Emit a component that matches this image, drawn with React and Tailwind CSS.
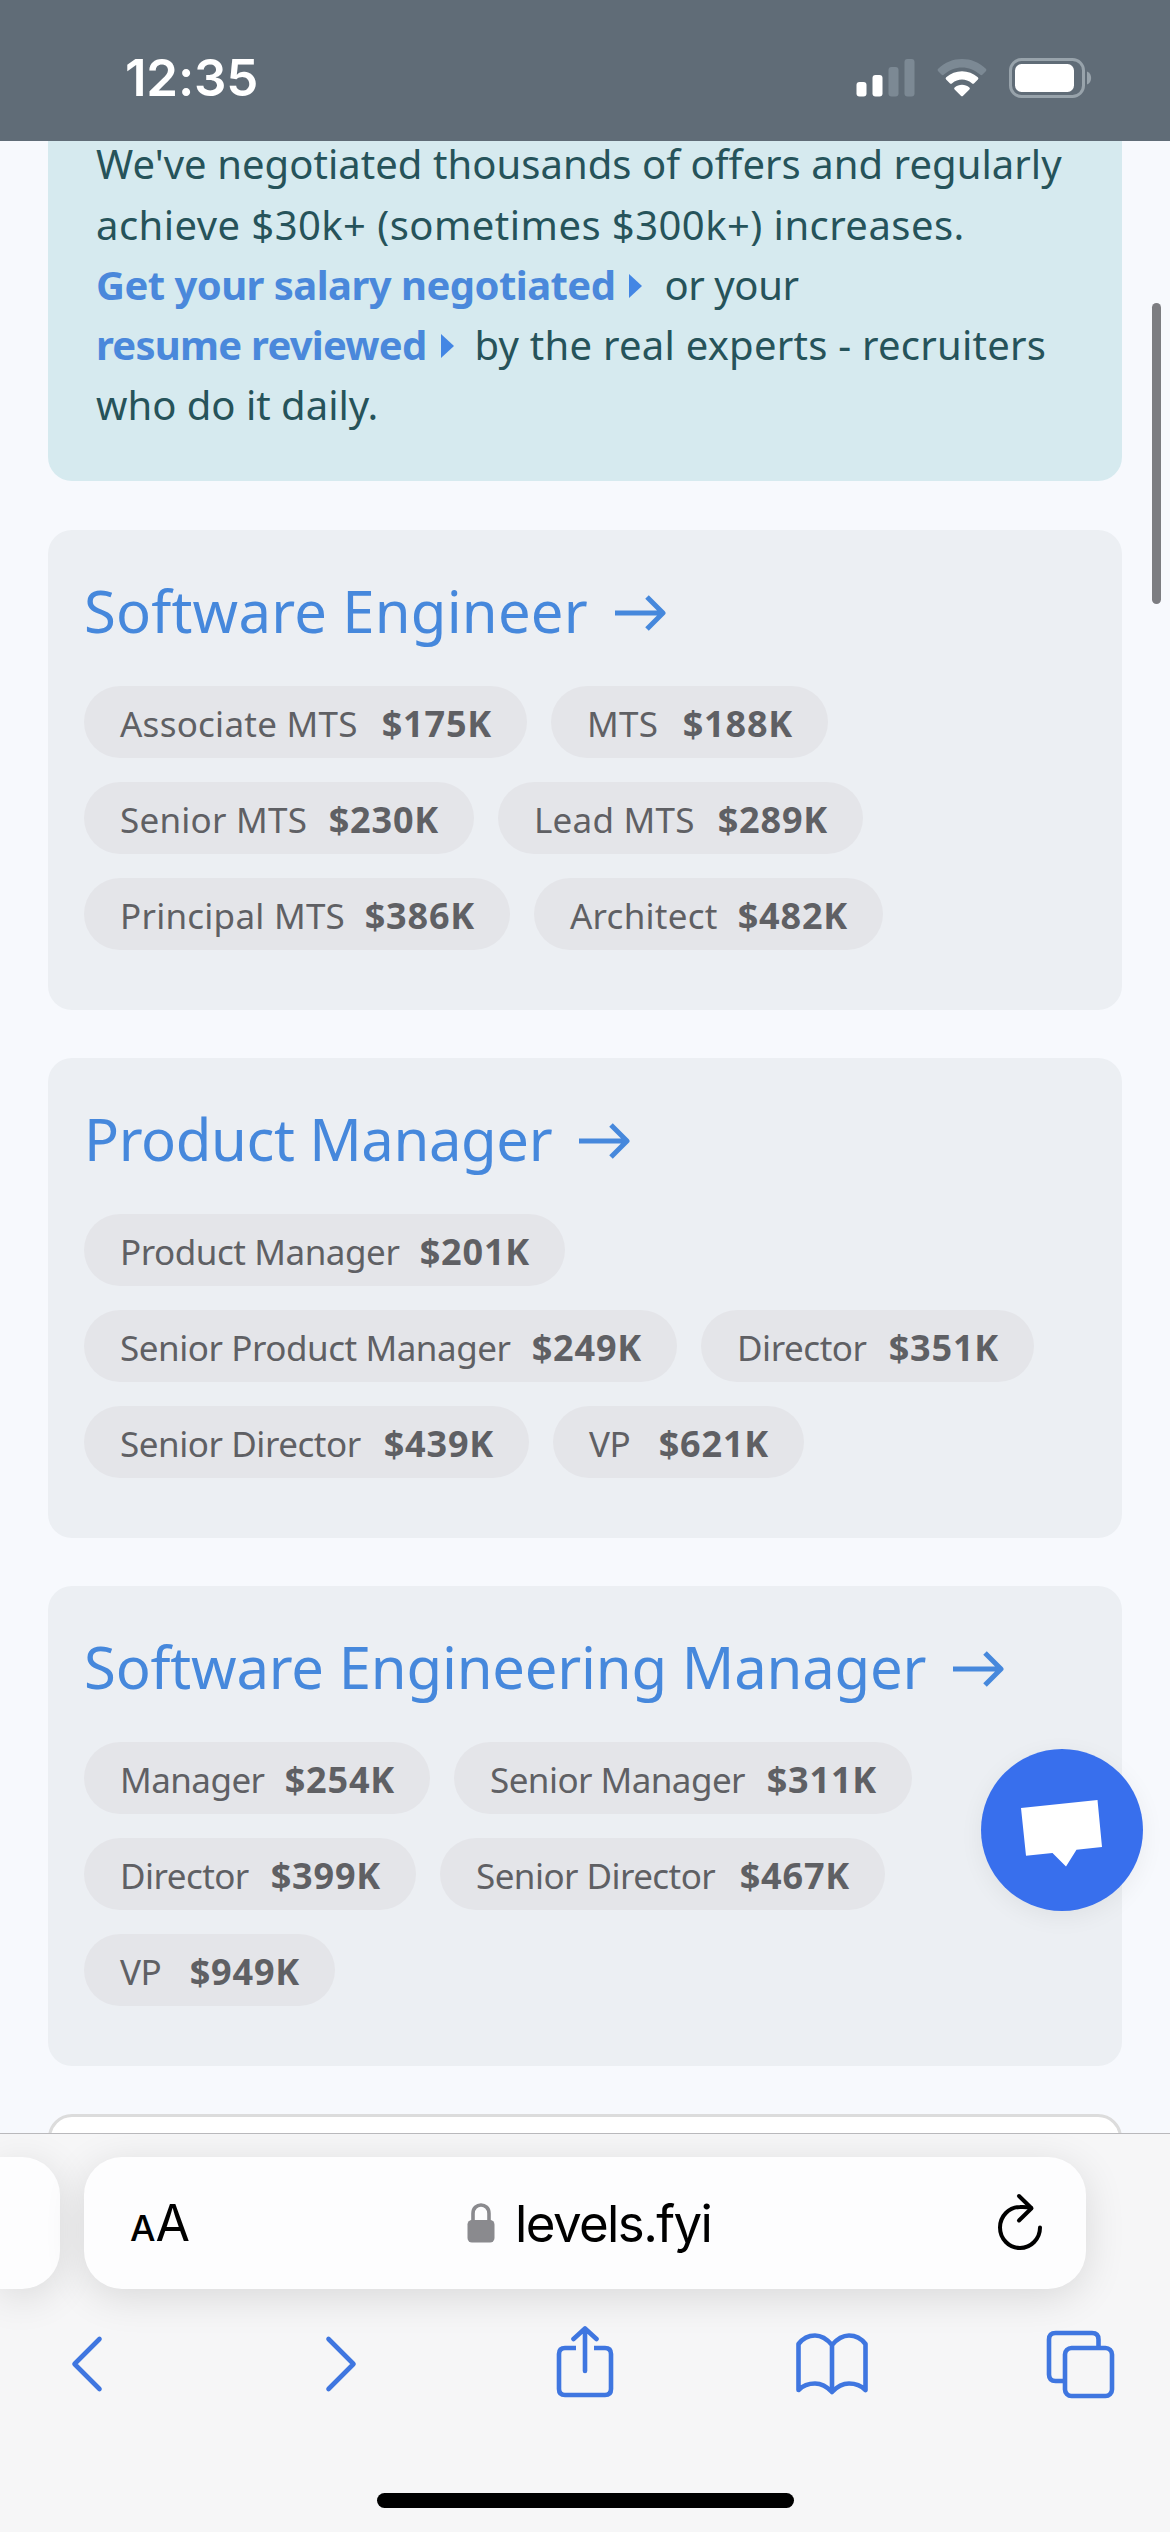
import React from "react";

const roles = [
  {
    title: "Software Engineer",
    tracking: "tracking-[0.2px]",
    levelTracking: "tracking-[0.25px]",
    levels: [
      { name: "Associate MTS", pay: "$175K", width: "w-[443px]" },
      { name: "MTS", pay: "$188K", width: "w-[277px]" },
      { name: "Senior MTS", pay: "$230K", width: "w-[390px]" },
      { name: "Lead MTS", pay: "$289K", width: "w-[365px]" },
      { name: "Principal MTS", pay: "$386K", width: "w-[426px]" },
      { name: "Architect", pay: "$482K", width: "w-[349px]" },
    ],
  },
  {
    title: "Product Manager",
    tracking: "tracking-[-0.4px]",
    levelTracking: "tracking-[-0.45px]",
    levels: [
      { name: "Product Manager", pay: "$201K", width: "w-[481px]" },
      { name: "Senior Product Manager", pay: "$249K", width: "w-[593px]" },
      { name: "Director", pay: "$351K", width: "w-[333px]" },
      { name: "Senior Director", pay: "$439K", width: "w-[445px]" },
      { name: "VP", pay: "$621K", width: "w-[251px]" },
    ],
  },
  {
    title: "Software Engineering Manager",
    tracking: "tracking-[-0.2px]",
    levelTracking: "tracking-[-0.55px]",
    levels: [
      { name: "Manager", pay: "$254K", width: "w-[346px]" },
      { name: "Senior Manager", pay: "$311K", width: "w-[458px]" },
      { name: "Director", pay: "$399K", width: "w-[332px]" },
      { name: "Senior Director", pay: "$467K", width: "w-[445px]" },
      { name: "VP", pay: "$949K", width: "w-[251px]" },
    ],
  },
];

const StatusBar = () => (
  <header className="flex h-[141px] shrink-0 items-start justify-between bg-[#606c77] pl-[125px] pr-[78px] pt-[56px]">
    <span className="font-['Inter',sans-serif] text-[51px] font-semibold leading-[44px] tracking-[-0.2px] text-white">
      12:35
    </span>
    <div className="flex items-start pt-[2px]">
      {/* Signal */}
      <svg className="mr-[22px] mt-px h-[38px] w-[59px]" viewBox="0 0 59 38" fill="#fff">
        <rect x="0.5" y="23" width="10" height="14.5" rx="3" />
        <rect x="16.5" y="16" width="10" height="21.5" rx="3" />
        <rect x="32.5" y="8" width="10" height="29.5" rx="3" fill="#7c8994" />
        <rect x="48.5" y="0" width="10" height="37.5" rx="3" fill="#7c8994" />
      </svg>
      {/* Wifi */}
      <svg className="mr-[22px] mt-px h-[38px] w-[50px]" viewBox="0 0 50 38" fill="#fff">
        <path d="M1.2 9.8C14.5-3.2 35.5-3.2 48.8 9.8Q50 11 48.8 12.2L45.3 15.7Q44.2 16.7 43 15.6C32.5 6.2 17.5 6.2 7 15.6Q5.8 16.7 4.7 15.7L1.2 12.2Q0 11 1.2 9.8Z" fill="#7c8994" />
        <path d="M9.2 18.3C18 10.2 32 10.2 40.8 18.3Q42 19.4 40.9 20.5L37.2 24.2Q36 25.2 34.8 24.2C29 19.2 21 19.2 15.2 24.2Q14 25.2 12.8 24.2L9.1 20.5Q8 19.4 9.2 18.3Z" />
        <path d="M17.6 28.4C21.8 24.8 28.2 24.8 32.4 28.4Q33.4 29.4 32.4 30.4L26.1 36.8Q25 37.8 23.9 36.8L17.6 30.4Q16.6 29.4 17.6 28.4Z" />
      </svg>
      {/* Battery */}
      <svg className="h-[40px] w-[83px]" viewBox="0 0 83 40">
        <rect x="1.5" y="1.5" width="73" height="37" rx="11" fill="none" stroke="#98a3ab" strokeWidth="3" />
        <rect x="6" y="6" width="59" height="28" rx="6.5" fill="#fff" />
        <path d="M78 13.5C83.5 15.5 83.5 24.5 78 26.5Z" fill="#98a3ab" />
      </svg>
    </div>
  </header>
);

const Caret = () => (
  <svg className="ml-[14px] inline-block h-[24px] w-[13px] align-[2px]" viewBox="0 0 13 24" fill="#4386e4">
    <path d="M0 0L13 12L0 24Z" />
  </svg>
);

const Banner = () => (
  <div className="h-[340px] shrink-0 rounded-b-[24px] bg-[#d6eaef] pl-[48px]">
    <p className="whitespace-nowrap text-[40px] leading-[60px] text-[#26535a]">
      <span className="mb-2 block leading-[46px] tracking-[0.05px]">We've negotiated thousands of offers and regularly</span>
      <span className="tracking-[0.45px]">achieve $30k+ (sometimes $300k+) increases.</span>
      <br />
      <a className="font-bold tracking-[-0.55px] text-[#4a88db]">
        Get your salary negotiated
        <Caret />
      </a>
      <span className="ml-[22px] tracking-[-0.4px]">or your</span>
      <br />
      <a className="font-bold tracking-[-0.75px] text-[#4a88db]">
        resume reviewed
        <Caret />
      </a>
      <span className="ml-[21px] tracking-[0.25px]">by the real experts - recruiters</span>
      <br />
      who do it daily.
    </p>
  </div>
);

const RoleCard = ({ title, tracking, levelTracking, levels }) => (
  <section className="h-[480px] shrink-0 rounded-[24px] bg-[#eceff3] px-[36px] pt-[38px]">
    <h2 className={`mb-[34px] flex h-[84px] items-center whitespace-nowrap text-[58px] text-[#4688dc] ${tracking}`}>
      {title}
      <svg className="ml-[26px] mt-[6px] h-[36px] w-[52px]" viewBox="0 0 52 36" fill="none" stroke="#4688dc" strokeWidth="5">
        <path d="M1 18H49M33 2L49 18L33 34" strokeLinejoin="round" />
      </svg>
    </h2>
    <div className="flex flex-wrap gap-[24px]">
      {levels.map((level) => (
        <div
          key={level.name}
          className={`flex h-[72px] justify-between whitespace-nowrap rounded-full bg-[#e4e5e9] pl-[36px] pr-[35px] pt-[2px] text-[35px] leading-[72px] text-[#5f6064] ${level.width}`}
        >
          <span className={levelTracking}>{level.name}</span>
          <b className="text-[36px] font-bold tracking-[0.8px]">{level.pay}</b>
        </div>
      ))}
    </div>
  </section>
);

const AddressBar = () => (
  <div className="flex h-[132px] gap-[24px]">
    <div className="w-[60px] rounded-r-[38px] bg-[#fdfdfe] shadow-[0_8px_40px_rgba(0,0,0,0.12)]" />
    <div className="flex w-[1002px] items-center rounded-[38px] bg-[#fdfdfe] pl-[46px] pr-[42px] font-['Inter',sans-serif] text-black shadow-[0_8px_40px_rgba(0,0,0,0.12)]">
      <span className="flex w-[337px] items-baseline leading-none">
        <span className="text-[36px] font-medium">A</span>
        <span className="text-[50px]">A</span>
      </span>
      <svg className="h-[40px] w-[28px]" viewBox="0 0 28 40">
        <path d="M6 20V10.5C6 -0.8 22 -0.8 22 10.5V20" fill="none" stroke="#8a8a8e" strokeWidth="3.6" />
        <rect x="0.5" y="17" width="27" height="22.5" rx="4.5" fill="#8a8a8e" />
      </svg>
      <span className="ml-[20px] text-[51px] leading-none tracking-[-1.6px]">levels.fyi</span>
      <svg className="mb-[4px] ml-auto h-[58px] w-[48px]" viewBox="0 0 48 58" fill="none" stroke="#000" strokeWidth="4" strokeLinecap="round" strokeLinejoin="round">
        <path d="M44 35.5A20 20.5 0 1 1 24 15Q30 14.6 35 16" />
        <path d="M23 4L35.5 16.3L23 28.5" />
      </svg>
    </div>
  </div>
);

const Toolbar = () => (
  <nav className="mt-[37px] flex h-[76px] items-center pl-[69px] [&_svg]:shrink-0 [&_svg]:fill-none [&_svg]:stroke-[#3f76e0] [&_svg]:stroke-[4.6]">
    <svg className="mr-[218px] h-[60px] w-[36px]" viewBox="0 0 36 60" strokeLinecap="round" strokeLinejoin="round">
      <path d="M30.5 5L5.5 30L30.5 55" />
    </svg>
    <svg className="mr-[196px] h-[60px] w-[36px]" viewBox="0 0 36 60" strokeLinecap="round" strokeLinejoin="round">
      <path d="M5.5 5L30.5 30L5.5 55" />
    </svg>
    {/* Share */}
    <svg className="mr-[180px] h-[76px] w-[60px]" viewBox="0 0 60 76" strokeLinecap="round" strokeLinejoin="round">
      <path d="M21 22H10Q4 22 4 28V63Q4 69 10 69H50Q56 69 56 63V28Q56 22 50 22H39" strokeLinecap="butt" />
      <path d="M30 45V2.5M18.5 13L30 2.5L41.5 13" />
    </svg>
    {/* Bookmarks */}
    <svg className="mr-[176px] h-[64px] w-[74px]" viewBox="0 0 74 64" strokeLinecap="round" strokeLinejoin="round">
      <path d="M37 13Q29 3.5 20 3.5Q10 3.5 3.5 12V58Q10 51.5 20 51.5Q29 51.5 37 60Q45 51.5 54 51.5Q64 51.5 70.5 58V12Q64 3.5 54 3.5Q45 3.5 37 13V60" />
    </svg>
    {/* Tabs */}
    <svg className="h-[70px] w-[70px]" viewBox="0 0 70 70" strokeLinejoin="round">
      <path d="M18 52H10.5Q4 52 4 45.5V10.5Q4 4 10.5 4H47Q53.5 4 53.5 10.5V18" />
      <rect x="20" y="19" width="47" height="48" rx="6.5" />
    </svg>
  </nav>
);

export default function App() {
  return (
    <div className="flex h-[2532px] w-[1170px] flex-col overflow-hidden bg-[#f7f9fd] font-['Noto_Sans',sans-serif]">
      <StatusBar />

      {/* Page content */}
      <main className="relative flex h-[1992px] shrink-0 flex-col overflow-hidden px-[48px]">
        <Banner />
        <div className="mt-[49px] flex shrink-0 flex-col gap-[48px]">
          {roles.map((role) => (
            <RoleCard key={role.title} {...role} />
          ))}
          <div className="h-[120px] rounded-[24px] border-[3px] border-[#dcdcdc] bg-white" />
        </div>

        {/* Scrollbar */}
        <div className="absolute right-[9px] top-[162px] h-[301px] w-[9px] rounded-full bg-[#7c7d81]" />

        {/* Chat button */}
        <button className="absolute right-[27px] top-[1608px] h-[162px] w-[162px] rounded-full bg-[#386fed] shadow-[0_6px_24px_rgba(0,0,0,0.06)]">
          <svg className="h-full w-full" viewBox="0 0 162 162" fill="#fff">
            <path d="M40 59L116.500 51L121 98L95.500 100.700L85 117.500L71.500 104L45 106.700Z" />
          </svg>
        </button>
      </main>

      {/* Browser chrome */}
      <footer className="flex h-[399px] shrink-0 flex-col overflow-hidden border-t border-[#b9b9bc] bg-[#f6f6f7] pt-[23px]">
        <AddressBar />
        <Toolbar />
        <div className="mx-auto mt-[91px] h-[15px] w-[417px] rounded-full bg-black" />
      </footer>
    </div>
  );
}
